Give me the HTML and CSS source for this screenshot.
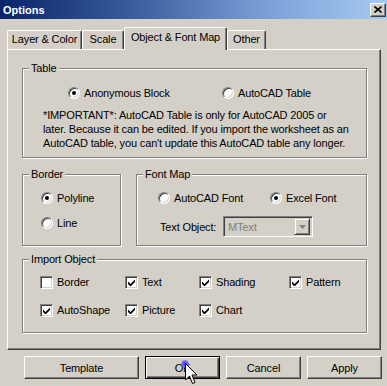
FILE: index.html
```html
<!DOCTYPE html>
<html>
<head>
<meta charset="utf-8">
<title>Options</title>
<link rel="stylesheet" href="styles.css">
</head>
<body>
<div class="window">
  <div class="titlebar">
    <span class="title">Options</span>
    <span class="close"><svg width="8" height="7" viewBox="0 0 8 7"><path d="M0.5 0.5 L7.5 6.5 M7.5 0.5 L0.5 6.5" stroke="#000" stroke-width="1.6"/></svg></span>
  </div>
  <div class="tabs">
    <div class="tab tab-layer">Layer &amp; Color</div>
    <div class="tab tab-scale">Scale</div>
    <div class="tab tab-object active">Object &amp; Font Map</div>
    <div class="tab tab-other">Other</div>
  </div>
  <div class="panel">
    <div class="group g-table">
      <div class="legend">Table</div>
      <div class="radio-row table-radios">
        <div class="opt opt-anon"><span class="radio on"></span>Anonymous Block</div>
        <div class="opt"><span class="radio"></span>AutoCAD Table</div>
      </div>
      <p class="note">*IMPORTANT*: AutoCAD Table is only for AutoCAD 2005 or<br>later. Because it can be edited. If you import the worksheet as an<br>AutoCAD table, you can't update this AutoCAD table any longer.</p>
    </div>
    <div class="split">
      <div class="group g-border">
        <div class="legend">Border</div>
        <div class="opt first-opt"><span class="radio on"></span>Polyline</div>
        <div class="opt second-opt"><span class="radio"></span>Line</div>
      </div>
      <div class="group g-font">
        <div class="legend">Font Map</div>
        <div class="radio-row font-radios">
          <div class="opt opt-acfont"><span class="radio"></span>AutoCAD Font</div>
          <div class="opt"><span class="radio on"></span>Excel Font</div>
        </div>
        <div class="text-object">
          <span class="to-label">Text Object:</span>
          <div class="select">
            <span class="select-value">MText</span>
            <span class="select-btn"><svg width="7" height="4" viewBox="0 0 7 4"><path d="M0 0 H7 L3.5 4 Z" fill="#808080"/></svg></span>
          </div>
        </div>
      </div>
    </div>
    <div class="group g-import">
      <div class="legend">Import Object</div>
      <div class="checks">
        <div class="opt"><span class="check"></span>Border</div>
        <div class="opt"><span class="check"><svg width="7" height="7" viewBox="0 0 7 7"><path d="M0 2.5 L2.5 5 L7 0.5 L7 3 L2.5 7.5 L0 5 Z" fill="#000"/></svg></span>Text</div>
        <div class="opt"><span class="check"><svg width="7" height="7" viewBox="0 0 7 7"><path d="M0 2.5 L2.5 5 L7 0.5 L7 3 L2.5 7.5 L0 5 Z" fill="#000"/></svg></span>Shading</div>
        <div class="opt"><span class="check"><svg width="7" height="7" viewBox="0 0 7 7"><path d="M0 2.5 L2.5 5 L7 0.5 L7 3 L2.5 7.5 L0 5 Z" fill="#000"/></svg></span>Pattern</div>
        <div class="opt"><span class="check"><svg width="7" height="7" viewBox="0 0 7 7"><path d="M0 2.5 L2.5 5 L7 0.5 L7 3 L2.5 7.5 L0 5 Z" fill="#000"/></svg></span>AutoShape</div>
        <div class="opt"><span class="check"><svg width="7" height="7" viewBox="0 0 7 7"><path d="M0 2.5 L2.5 5 L7 0.5 L7 3 L2.5 7.5 L0 5 Z" fill="#000"/></svg></span>Picture</div>
        <div class="opt"><span class="check"><svg width="7" height="7" viewBox="0 0 7 7"><path d="M0 2.5 L2.5 5 L7 0.5 L7 3 L2.5 7.5 L0 5 Z" fill="#000"/></svg></span>Chart</div>
      </div>
    </div>
  </div>
  <div class="buttons">
    <button class="btn btn-template">Template</button>
    <button class="btn btn-default">OK</button>
    <button class="btn">Cancel</button>
    <button class="btn">Apply</button>
  </div>
  <div class="click-dot"></div>
  <svg class="cursor" width="13" height="22" viewBox="0 0 13 22"><path d="M0.5 0.5 L0.5 17 L4.5 13 L7.5 20.5 L10 19.5 L7 12 L12 12 Z" fill="#fff" stroke="#000" stroke-width="1" stroke-linejoin="miter"/></svg>
</div>
</body>
</html>
```
FILE: styles.css
```css
html, body {
  margin: 0;
  padding: 0;
  background: #d4d0c8;
}

.window {
  position: relative;
  width: 387px;
  height: 386px;
  overflow: hidden;
  background: #d4d0c8;
  font-family: "Liberation Sans", Arial, sans-serif;
  font-size: 11px;
  letter-spacing: -0.15px;
  color: #000;
}

/* title bar */
.titlebar {
  height: 19px;
  box-sizing: border-box;
  padding: 0 1px 0 3px;
  display: flex;
  align-items: center;
  justify-content: space-between;
  background: linear-gradient(to right, #0a246a 0%, #3a5e9e 35%, #7ea2d8 70%, #a6caf0 100%);
}

.title {
  color: #fff;
  font-weight: bold;
  font-size: 11px;
  letter-spacing: 0;
}

.close {
  width: 16px;
  height: 14px;
  box-sizing: border-box;
  background: #d4d0c8;
  border: 1px solid;
  border-color: #fff #404040 #404040 #fff;
  box-shadow: inset -1px -1px 0 #808080;
  display: flex;
  align-items: center;
  justify-content: center;
}

/* tabs */
.tabs {
  height: 22px;
  margin-top: 8px;
  padding-left: 7px;
  display: flex;
  align-items: flex-end;
}

.tab {
  height: 19px;
  box-sizing: border-box;
  border-left: 1px solid #fff;
  border-top: 1px solid #fff;
  border-right: 1px solid #404040;
  border-radius: 2px 2px 0 0;
  box-shadow: inset -1px 0 0 #808080;
  text-align: center;
  line-height: 17px;
  white-space: nowrap;
}

.tab-layer { width: 75px; }
.tab-scale { width: 42px; }
.tab-object { width: 103px; }
.tab-other { width: 39px; }

.tab.active {
  height: 23px;
  margin-bottom: -1px;
  line-height: 19px;
  position: relative;
  z-index: 1;
  background: #d4d0c8;
}

/* panel */
.panel {
  width: 374px;
  height: 301px;
  margin-left: 7px;
  box-sizing: border-box;
  border-top: 1px solid #fff;
  border-left: 1px solid #fff;
  border-right: 1px solid #404040;
  border-bottom: 1px solid #404040;
  box-shadow: inset -1px -1px 0 #808080;
  padding: 18px 0 0 14px;
}

.group {
  box-sizing: border-box;
  border: 1px solid #808080;
  box-shadow: inset 1px 1px 0 #fff, 1px 1px 0 #fff;
}

.legend {
  width: fit-content;
  margin: -8px 0 0 6px;
  padding: 0 2px;
  line-height: 14px;
  background: #d4d0c8;
}

.g-table {
  width: 345px;
  height: 90px;
}

.radio-row {
  display: flex;
}

.opt {
  display: flex;
  align-items: center;
  height: 14px;
  line-height: 14px;
  white-space: nowrap;
}

.table-radios {
  margin-top: 11px;
  padding-left: 45px;
}

.opt-anon { width: 154px; }

.note {
  margin: 8px 0 0 0;
  padding-left: 20px;
  line-height: 14px;
  white-space: nowrap;
}

.split {
  display: flex;
  gap: 15px;
  margin-top: 16px;
}

.g-border {
  width: 99px;
  height: 72px;
  padding-left: 18px;
}

.g-border .legend {
  margin-left: -12px;
}

.first-opt { margin-top: 10px; }
.second-opt { margin-top: 11px; }

.g-font {
  width: 231px;
  height: 72px;
  padding-left: 21px;
}

.g-font .legend {
  margin-left: -15px;
}

.font-radios {
  margin-top: 10px;
}

.opt-acfont { width: 112px; }

.text-object {
  display: flex;
  align-items: center;
  margin-top: 11px;
  margin-left: 2px;
}

.to-label {
  width: 63px;
}

.select {
  width: 90px;
  height: 21px;
  box-sizing: border-box;
  border: 1px solid;
  border-color: #808080 #fff #fff #808080;
  box-shadow: inset 1px 1px 0 #404040, inset -1px -1px 0 #d4d0c8;
  background: #d4d0c8;
  padding: 2px;
  display: flex;
  align-items: center;
  justify-content: space-between;
}

.select-value {
  color: #808080;
  padding-left: 2px;
}

.select-btn {
  width: 16px;
  height: 17px;
  box-sizing: border-box;
  border: 1px solid;
  border-color: #d4d0c8 #404040 #404040 #d4d0c8;
  box-shadow: inset 1px 1px 0 #fff, inset -1px -1px 0 #808080;
  display: flex;
  align-items: center;
  justify-content: center;
}

.g-import {
  width: 345px;
  height: 74px;
  margin-top: 13px;
  padding-left: 17px;
}

.g-import .legend {
  margin-left: -11px;
}

.checks {
  display: grid;
  grid-template-columns: 85px 74px 90px auto;
  row-gap: 14px;
  margin-top: 9px;
}

/* controls */
.radio {
  flex: none;
  width: 12px;
  height: 12px;
  box-sizing: border-box;
  border-radius: 50%;
  background: #fff;
  border: 1px solid;
  border-color: #808080 #fff #fff #808080;
  box-shadow: inset 1px 1px 0 #404040, inset -1px -1px 0 #d4d0c8;
  margin-right: 4px;
  position: relative;
}

.radio.on::after {
  content: "";
  position: absolute;
  left: 3px;
  top: 3px;
  width: 4px;
  height: 4px;
  border-radius: 50%;
  background: #000;
}

.check {
  flex: none;
  width: 13px;
  height: 13px;
  box-sizing: border-box;
  background: #fff;
  border: 1px solid;
  border-color: #808080 #fff #fff #808080;
  box-shadow: inset 1px 1px 0 #404040, inset -1px -1px 0 #d4d0c8;
  margin-right: 4px;
  display: flex;
  align-items: center;
  justify-content: center;
}

/* buttons */
.buttons {
  display: flex;
  gap: 6px;
  margin-top: 6px;
  padding-left: 24px;
}

.btn {
  width: 75px;
  height: 23px;
  box-sizing: border-box;
  margin: 0;
  padding: 0;
  background: #d4d0c8;
  border: 1px solid;
  border-color: #fff #404040 #404040 #fff;
  box-shadow: inset -1px -1px 0 #808080;
  font-family: "Liberation Sans", Arial, sans-serif;
  font-size: 11px;
  letter-spacing: -0.15px;
  color: #000;
}

.btn-template { width: 115px; }

.btn-default {
  border: 1px solid #000;
  box-shadow: inset 1px 1px 0 #fff, inset -1px -1px 0 #404040, inset -2px -2px 0 #808080;
}

/* overlays */
.click-dot {
  position: absolute;
  left: 181px;
  top: 360px;
  width: 8px;
  height: 8px;
  border-radius: 50%;
  background: radial-gradient(circle, #3d3dff 0%, #6a6aff 50%, rgba(120,120,255,0) 100%);
}

.cursor {
  position: absolute;
  left: 185px;
  top: 363px;
}
```
